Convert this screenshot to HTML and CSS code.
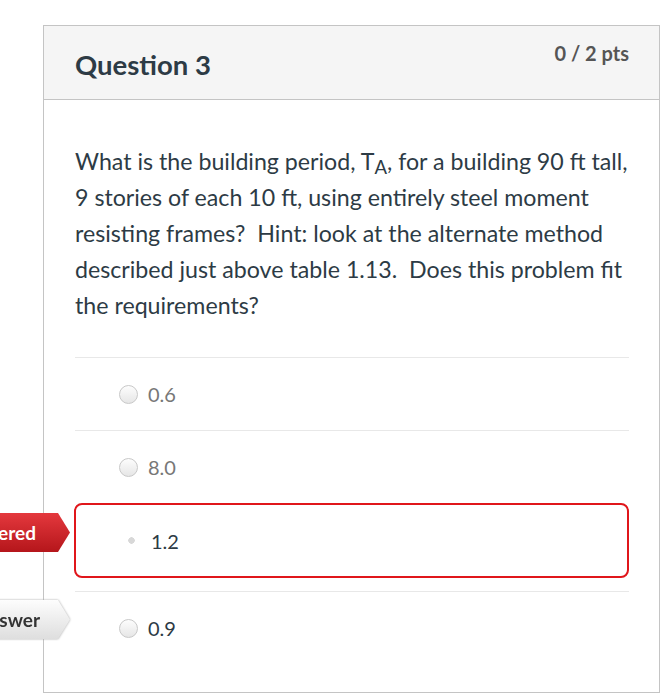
FILE: index.html
```html
<!DOCTYPE html>
<html lang="en">
<head>
    <meta charset="UTF-8">
    <meta name="viewport" content="width=device-width, initial-scale=1.0">
    <title>Question 3</title>
    <link rel="stylesheet" href="styles.css">
</head>
<body>
    <div class="question">
        <div class="header">
            <h2 class="title">Question 3</h2>
            <span class="points">0 / 2 pts</span>
        </div>

        <div class="content">
            <p class="text">
                What is the building period, T<sub>A</sub>, for a building 90 ft tall,<br>
                9 stories of each 10 ft, using entirely steel moment<br>
                resisting frames?&nbsp; Hint: look at the alternate method<br>
                described just above table 1.13.&nbsp; Does this problem fit<br>
                the requirements?
            </p>

            <div class="answers">
                <div class="answer muted">
                    <span class="radio"></span>
                    <span class="label">0.6</span>
                </div>
                <div class="answer muted">
                    <span class="radio"></span>
                    <span class="label">8.0</span>
                </div>
                <div class="answer selected">
                    <div class="badge wrong">You Answered</div>
                    <span class="radio dot"></span>
                    <span class="label">1.2</span>
                </div>
                <div class="answer">
                    <div class="badge-wrap"><div class="badge right">Correct Answer</div></div>
                    <span class="radio"></span>
                    <span class="label">0.9</span>
                </div>
            </div>
        </div>
    </div>
</body>
</html>
```

FILE: styles.css
```css
* {
    box-sizing: border-box;
}

body {
    margin: 0;
    font-family: Lato, "Open Sans", sans-serif;
    color: #2d3b45;
    background: #fff;
    overflow: hidden;
}

.question {
    margin: 25px 0 0 43px;
    width: 617px;
    height: 668px;
    border: 1px solid #c4c4c4;
}

.header {
    height: 74px;
    display: flex;
    justify-content: space-between;
    align-items: flex-start;
    padding: 0 30px 0 31px;
    background: #f5f5f5;
    border-bottom: 1px solid #c4c4c4;
}

.title {
    margin: 0;
    padding-top: 23px;
    font-size: 27.5px;
    font-weight: 700;
    line-height: 32px;
}

.points {
    padding-top: 15px;
    font-size: 20px;
    font-weight: 700;
    line-height: 24px;
    color: #555;
}

.content {
    padding: 43px 30px 0 31px;
}

.text {
    margin: 0 0 34px;
    font-size: 23.2px;
    line-height: 36px;
    white-space: nowrap;
}

.text sub {
    font-size: 0.8em;
    line-height: 0;
    vertical-align: -0.2em;
}

.answer {
    position: relative;
    height: 73px;
    display: flex;
    align-items: center;
    gap: 10px;
    padding-left: 44px;
    border-top: 1px solid #e8e8e8;
    font-size: 20px;
}

.answer.muted .label {
    color: #777;
}

.answer.selected {
    height: 75px;
    margin: 0 0 13px -1px;
    padding-left: 46px;
    border: 2px solid #e0161b;
    border-radius: 8px;
}

.radio {
    width: 19px;
    height: 19px;
    border-radius: 50%;
    border: 1px solid #c8c8c8;
    background: linear-gradient(#fdfdfd, #e6e6e6);
}

.radio.dot {
    border: none;
    background: radial-gradient(circle, #d8d8d8 0 3px, transparent 3.5px);
}

.badge {
    position: absolute;
    width: 200px;
    height: 39px;
    padding-right: 34px;
    display: flex;
    align-items: center;
    justify-content: flex-end;
    white-space: nowrap;
    font-size: 19px;
    font-weight: 700;
    clip-path: polygon(0 0, calc(100% - 12px) 0, 100% 50%, calc(100% - 12px) 100%, 0 100%);
}

.badge.wrong {
    top: 8px;
    right: calc(100% + 6px);
    color: #fff;
    background: linear-gradient(#e4383d, #b5161b);
}

.badge-wrap {
    position: absolute;
    top: 8px;
    right: calc(100% + 5px);
    width: 200px;
    height: 39px;
    filter: drop-shadow(0 0 1px #a8a8a8);
}

.badge.right {
    position: static;
    padding-right: 30px;
    color: #333;
    background: linear-gradient(#fdfdfd, #dedede);
}
```
